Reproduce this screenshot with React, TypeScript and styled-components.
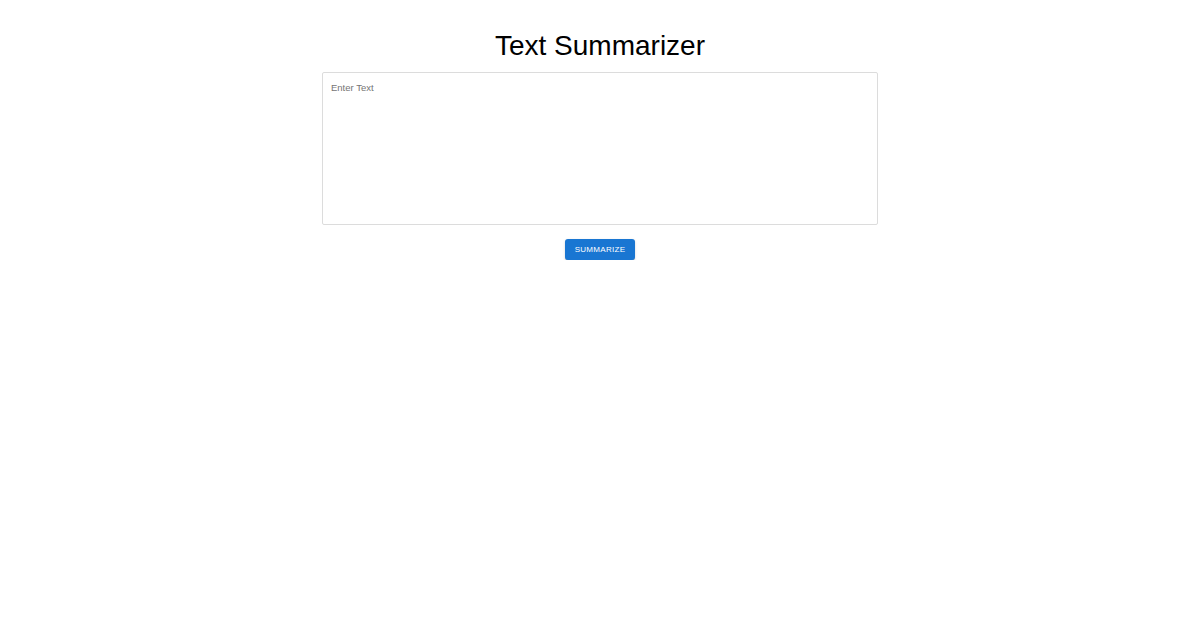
import React, { useState } from "react";
import styled, { createGlobalStyle } from "styled-components";

const GlobalStyle = createGlobalStyle`
  html, body {
    margin: 0;
    padding: 0;
    background: #fff;
  }
`;

const Page = styled.div`
  display: flex;
  flex-direction: column;
  align-items: center;
  padding-top: 30px;
  font-family: "Liberation Sans", Arial, sans-serif;
`;

const Title = styled.h1`
  margin: 0 0 10px;
  font-size: 28px;
  font-weight: 400;
  line-height: 32px;
  color: #000;
`;

const TextInput = styled.textarea`
  box-sizing: border-box;
  width: 556px;
  height: 153px;
  padding: 9px 8px;
  border: 1px solid #dcdcdc;
  border-radius: 2px;
  resize: none;
  outline: none;
  font-family: "Liberation Sans", Arial, sans-serif;
  font-size: 9.5px;
  color: #333;

  &::placeholder {
    color: #757575;
  }
`;

const SummarizeButton = styled.button`
  margin-top: 14px;
  width: 70px;
  height: 21px;
  padding: 0;
  border: none;
  border-radius: 3px;
  background: #1976d2;
  color: #fff;
  font-family: "Liberation Sans", Arial, sans-serif;
  font-size: 8px;
  font-weight: 400;
  letter-spacing: 0.3px;
  text-transform: uppercase;
  box-shadow: 0 2px 1px -1px rgba(0, 0, 0, 0.2), 0 1px 1px 0 rgba(0, 0, 0, 0.14),
    0 1px 3px 0 rgba(0, 0, 0, 0.12);
  cursor: pointer;
`;

const App = () => {
  const [text, setText] = useState("");

  return (
    <Page>
      <GlobalStyle />
      <Title>Text Summarizer</Title>
      <TextInput
        placeholder="Enter Text"
        value={text}
        onChange={(e) => setText(e.target.value)}
      />
      <SummarizeButton>Summarize</SummarizeButton>
    </Page>
  );
};

export default App;
